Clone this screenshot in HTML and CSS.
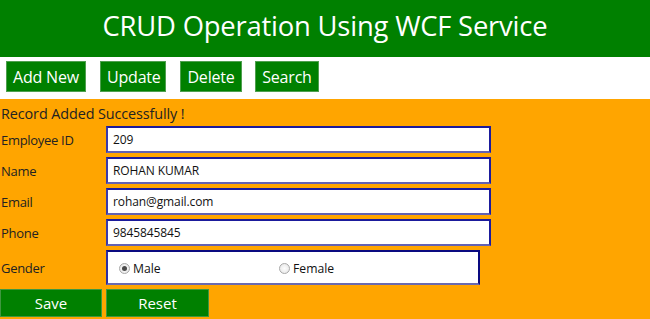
FILE: index.html
```html
<!DOCTYPE html>
<html>
<head>
<meta charset="utf-8">
<link rel="stylesheet" href="styles.css">
</head>
<body>
<header class="top"><h1 class="title">CRUD Operation Using WCF Service</h1></header>
<nav class="toolbar">
  <button class="tbtn">Add New</button>
  <button class="tbtn">Update</button>
  <button class="tbtn">Delete</button>
  <button class="tbtn">Search</button>
</nav>
<main class="panel">
  <p class="msg">Record Added Successfully !</p>
  <div class="row"><label class="lbl">Employee ID</label><input class="field" type="text" value="209"></div>
  <div class="row"><label class="lbl">Name</label><input class="field" type="text" value="ROHAN KUMAR"></div>
  <div class="row"><label class="lbl">Email</label><input class="field" type="text" value="rohan@gmail.com"></div>
  <div class="row"><label class="lbl">Phone</label><input class="field" type="text" value="9845845845"></div>
  <div class="row grow"><label class="lbl">Gender</label>
    <div class="gender">
      <label class="opt"><span class="radio on"></span>Male</label>
      <label class="opt"><span class="radio"></span>Female</label>
    </div>
  </div>
  <div class="actions">
    <button class="abtn save">Save</button>
    <button class="abtn">Reset</button>
  </div>
</main>
</body>
</html>
```
FILE: styles.css
```css
html, body { margin: 0; padding: 0; }
body {
  font-family: "Open Sans", "Noto Sans", "DejaVu Sans", sans-serif;
  background: #ffa500;
  height: 319px;
  overflow: hidden;
}
.top {
  background: #008000;
  height: 57px;
  display: flex;
  align-items: center;
  justify-content: center;
}
.title {
  margin: 0;
  color: #fff;
  font-weight: 400;
  font-size: 27.4px;
  letter-spacing: -0.2px;
  line-height: 1;
  padding-bottom: 6px;
}
.toolbar {
  background: #fff;
  height: 42px;
  box-sizing: border-box;
  padding: 4px 0 0 6px;
  display: flex;
  gap: 14px;
  align-items: flex-start;
}
.tbtn {
  background: #008000;
  color: #fff;
  border: 1px solid #4f9f4f;
  height: 31px;
  padding: 0 6px;
  font-family: inherit;
  font-size: 16px;
  letter-spacing: -0.2px;
}
.tbtn:nth-child(1) { width: 80px; }
.tbtn:nth-child(2) { width: 66px; }
.tbtn:nth-child(3) { width: 62px; }
.tbtn:nth-child(4) { width: 64px; margin-left: -1px; }
.panel {
  padding: 5px 0 0 0;
}
.msg {
  margin: 0 0 2px 1px;
  font-size: 14.4px;
  line-height: 20px;
  color: #222;
  letter-spacing: -0.1px;
}
.row {
  display: flex;
  align-items: center;
  height: 27px;
  margin-bottom: 4px;
}
.row.grow { height: 35px; margin-bottom: 4px; }
.lbl {
  width: 106px;
  padding-left: 1px;
  box-sizing: border-box;
  font-size: 13px;
  color: #222;
  letter-spacing: -0.3px;
}
.field {
  width: 385px;
  height: 27px;
  box-sizing: border-box;
  margin: 0;
  border: 2px solid #1b1b9c;
  border-bottom-color: #6262b4;
  border-left-color: #3a3aa8;
  padding: 0 0 0 5px;
  font-family: inherit;
  font-size: 12px;
  color: #111;
  background: #fff;
  letter-spacing: -0.1px;
}
.gender {
  width: 374px;
  height: 35px;
  box-sizing: border-box;
  border: 2px solid #0a0a80;
  border-bottom-color: #6a6ab0;
  border-left-color: #2e2ea0;
  background: #fff;
  display: grid;
  grid-template-columns: 160px 1fr;
  align-items: center;
  padding: 2px 0 0 11px;
}
.opt {
  display: flex;
  align-items: center;
  font-size: 12.2px;
  color: #111;
  letter-spacing: 0;
}
.radio {
  width: 11px;
  height: 11px;
  border-radius: 50%;
  box-sizing: border-box;
  border: 1px solid #a8a8a8;
  background: radial-gradient(circle, #fdfdfd 0, #e4e4e4 100%);
  margin-right: 3px;
  display: inline-flex;
  align-items: center;
  justify-content: center;
}
.radio.on::after {
  content: "";
  width: 5px;
  height: 5px;
  border-radius: 50%;
  background: #4a4a4a;
}
.actions {
  display: flex;
  gap: 4px;
}
.abtn {
  width: 102px;
  height: 28px;
  background: #008000;
  color: #fff;
  border: 1px solid #3f973f;
  font-family: inherit;
  font-size: 15px;
  padding: 0;
}
.abtn + .abtn { width: 103px; }
```
